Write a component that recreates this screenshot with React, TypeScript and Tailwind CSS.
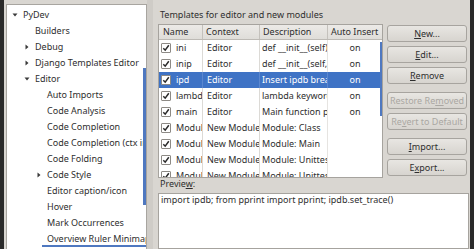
import React from "react";

type TreeRow = { l: 0 | 1 | 2; t: string; a?: "down" | "right" };

const treeRows: TreeRow[] = [
  { l: 0, t: "PyDev", a: "down" },
  { l: 1, t: "Builders" },
  { l: 1, t: "Debug", a: "right" },
  { l: 1, t: "Django Templates Editor", a: "right" },
  { l: 1, t: "Editor", a: "down" },
  { l: 2, t: "Auto Imports" },
  { l: 2, t: "Code Analysis" },
  { l: 2, t: "Code Completion" },
  { l: 2, t: "Code Completion (ctx insensitive and common tokens)" },
  { l: 2, t: "Code Folding" },
  { l: 2, t: "Code Style", a: "right" },
  { l: 2, t: "Editor caption/icon" },
  { l: 2, t: "Hover" },
  { l: 2, t: "Mark Occurrences" },
  { l: 2, t: "Overview Ruler Minimap" },
  { l: 2, t: "Save Actions" },
];

const indent = ["w-[4px]", "w-[16px]", "w-[28px]"];

type TplRow = { name: string; ctx: string; desc: string; auto: string; sel?: boolean };

const tplRows: TplRow[] = [
  { name: "ini", ctx: "Editor", desc: "def __init__(self):", auto: "on" },
  { name: "inip", ctx: "Editor", desc: "def __init__(self, ...)", auto: "on" },
  { name: "ipd", ctx: "Editor", desc: "Insert ipdb breakpoint", auto: "on", sel: true },
  { name: "lambda", ctx: "Editor", desc: "lambda keyword", auto: "on" },
  { name: "main", ctx: "Editor", desc: "Main function pattern", auto: "on" },
  { name: "Module: Class", ctx: "New Module", desc: "Module: Class", auto: "" },
  { name: "Module: Main", ctx: "New Module", desc: "Module: Main", auto: "" },
  { name: "Module: Unittest", ctx: "New Module", desc: "Module: Unittest", auto: "" },
  { name: "Module: Unittest with setUp", ctx: "New Module", desc: "Module: Unittest with setUp", auto: "" },
];

function Arrow({ dir }: { dir: "down" | "right" }) {
  return (
    <svg width="8" height="8" viewBox="0 0 8 8" className="shrink-0">
      {dir === "down" ? (
        <path d="M1.5 2.5h5L4 5.5z" fill="#3a3a3a" />
      ) : (
        <path d="M2.5 1.5v5L5.5 4z" fill="#3a3a3a" />
      )}
    </svg>
  );
}

function Check() {
  return (
    <div className="flex h-[10px] w-[10px] shrink-0 items-center justify-center rounded-[1px] border border-[#8d8a85] bg-white">
      <svg width="8" height="8" viewBox="0 0 8 8">
        <path d="M1.3 4.2l1.9 2 3.6-5" fill="none" stroke="#2a2a2a" strokeWidth="1.5" />
      </svg>
    </div>
  );
}

function Btn({ children, disabled }: { children: React.ReactNode; disabled?: boolean }) {
  return (
    <div
      className={
        "flex h-[17px] w-[80px] items-center justify-center rounded-[3px] border border-[#a7a49f] bg-gradient-to-b from-[#e8e6e2] to-[#d7d4cf] text-[9px] " +
        (disabled ? "text-[#aaa7a2]" : "text-[#2e2e2e]")
      }
    >
      {children}
    </div>
  );
}

export default function App() {
  return (
    <div className="flex h-[249px] w-[474px] overflow-hidden bg-[#2a2a2a] font-['Noto_Sans',sans-serif] text-[9px] text-[#2e2e2e]">
      <div className="w-[4px] shrink-0" />
      <div className="flex w-[466px] shrink-0 bg-[#d9d6d1] pl-[2px] pt-[4px]">
        {/* Tree */}
        <div className="relative h-[260px] w-[141px] shrink-0 overflow-hidden border border-[#a8a5a0] bg-white pt-[2px]">
          {treeRows.map((r, i) => (
            <div key={i} className="flex h-[16px] items-center whitespace-nowrap leading-[16px]">
              <div className={indent[r.l] + " shrink-0"} />
              <div className="flex w-[8px] shrink-0 items-center">{r.a ? <Arrow dir={r.a} /> : null}</div>
              <span className="ml-[4px]">{r.t}</span>
            </div>
          ))}
          <div className="absolute left-[136px] top-[63px] h-[137px] w-[3px] bg-[#4f78c0]" />
          <div className="absolute left-[35px] top-[240px] h-[2px] w-[105px] bg-[#4f78c0]" />
        </div>
        {/* Sash */}
        <div className="-mt-[4px] w-[6px] shrink-0 bg-[#cfccc7]" />
        {/* Right panel */}
        <div className="-mt-[4px] flex w-[317px] shrink-0 flex-col pl-[5px] pr-[1px]">
          <div className="h-[14px] pl-[2px] pt-[8px] leading-[14px] box-content">Templates for editor and new modules</div>
          <div className="mt-[2px] flex gap-[4px]">
            {/* Table */}
            <div className="relative h-[154px] w-[225px] shrink-0 overflow-hidden border border-[#a6a39e] bg-white">
              <div className="flex h-[15px] border-b border-[#bdbab5] bg-gradient-to-b from-[#eceae7] to-[#dfddd9] leading-[14px]">
                <div className="w-[43px] shrink-0 pl-[4px]">Name</div>
                <div className="w-[57px] shrink-0 border-l border-[#c4c1bc] pl-[3px]">Context</div>
                <div className="w-[68px] shrink-0 border-l border-[#c4c1bc] pl-[3px]">Description</div>
                <div className="w-[55px] shrink-0 border-l border-[#c4c1bc] pl-[3px]">Auto Insert</div>
              </div>
              {tplRows.map((r, i) => (
                <div
                  key={i}
                  className={
                    "flex h-[16px] items-center whitespace-nowrap leading-[16px] " +
                    (r.sel ? "bg-[#3f73c5] text-white" : "")
                  }
                >
                  <div className="flex h-full w-[43px] shrink-0 items-center overflow-hidden pl-[2px]">
                    <Check />
                    <span className="ml-[5px]">{r.name}</span>
                  </div>
                  <div
                    className={
                      "h-full w-[57px] shrink-0 overflow-hidden border-l pl-[4px] " +
                      (r.sel ? "border-[#5b87cf]" : "border-[#dcdad6]")
                    }
                  >
                    {r.ctx}
                  </div>
                  <div
                    className={
                      "h-full w-[68px] shrink-0 overflow-hidden border-l pl-[2px] " +
                      (r.sel ? "border-[#5b87cf]" : "border-[#dcdad6]")
                    }
                  >
                    {r.desc}
                  </div>
                  <div
                    className={
                      "h-full w-[55px] shrink-0 overflow-hidden border-l text-center " +
                      (r.sel ? "border-[#5b87cf]" : "border-[#e6e4e1]")
                    }
                  >
                    {r.auto}
                  </div>
                </div>
              ))}
              <div className="absolute left-[221px] top-[17px] h-[74px] w-[2px] bg-[#4f78c0]" />
            </div>
            {/* Buttons */}
            <div className="flex flex-col pt-[1px]">
              <div className="flex flex-col gap-[4px]">
                <Btn>
                  <u>N</u>ew...
                </Btn>
                <Btn>
                  <u>E</u>dit...
                </Btn>
                <Btn>
                  <u>R</u>emove
                </Btn>
              </div>
              <div className="mt-[8px] flex flex-col gap-[4px]">
                <Btn disabled>
                  Restore Re<u>m</u>oved
                </Btn>
                <Btn disabled>
                  Re<u>v</u>ert to Default
                </Btn>
              </div>
              <div className="mt-[8px] flex flex-col gap-[4px]">
                <Btn>
                  <u>I</u>mport...
                </Btn>
                <Btn>
                  E<u>x</u>port...
                </Btn>
              </div>
            </div>
          </div>
          <div className="h-[12px] pl-[2px] leading-[12px]">
            Previe<u>w</u>:
          </div>
          <div className="mt-[3px] h-[80px] w-[311px] border border-[#a6a39e] bg-white px-[2px] leading-[12px]">
            import ipdb; from pprint import pprint; ipdb.set_trace()
          </div>
        </div>
      </div>
      <div className="w-[4px] shrink-0" />
    </div>
  );
}
